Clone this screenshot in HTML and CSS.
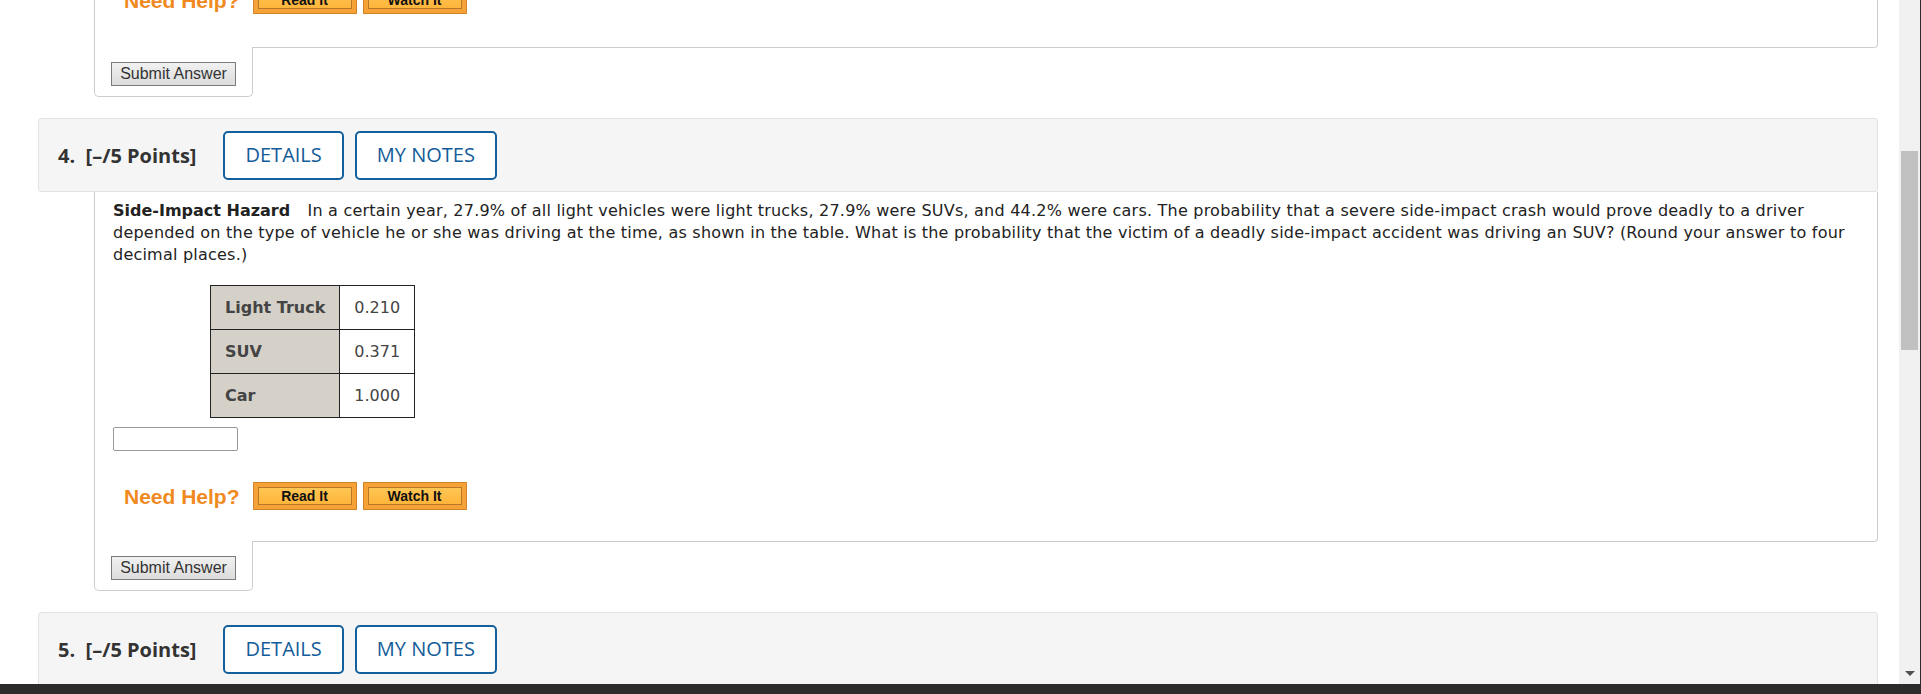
FILE: index.html
```html
<!DOCTYPE html>
<html lang="en">
<head>
<meta charset="utf-8">
<title>Assignment</title>
<link rel="stylesheet" href="styles.css">
</head>
<body>
<div class="screen">
  <div class="viewport">
    <main class="page">
      <section class="question">
        <div class="qbody qbody--cut">
          <div class="help help--first">
            <span class="help-label">Need Help?</span>
            <button class="help-btn" type="button"><span>Read It</span></button>
            <button class="help-btn" type="button"><span>Watch It</span></button>
          </div>
        </div>
        <div class="submit-tab"><button class="submit" type="button">Submit Answer</button></div>
      </section>

      <section class="question">
        <header class="qhead">
          <span class="qnum">4.&nbsp; [–/5 Points]</span>
          <button class="qbtn" type="button">DETAILS</button>
          <button class="qbtn" type="button">MY NOTES</button>
        </header>
        <div class="qbody">
          <p class="qtext"><b class="qtitle">Side-Impact Hazard</b> In a certain year, 27.9% of all light vehicles were light trucks, 27.9% were SUVs, and 44.2% were cars. The probability that a severe side-impact crash would prove deadly to a driver depended on the type of vehicle he or she was driving at the time, as shown in the table. What is the probability that the victim of a deadly side-impact accident was driving an SUV? (Round your answer to four decimal places.)</p>
          <table class="data">
            <tr><th>Light Truck</th><td>0.210</td></tr>
            <tr><th>SUV</th><td>0.371</td></tr>
            <tr><th>Car</th><td>1.000</td></tr>
          </table>
          <input class="answer" type="text" aria-label="answer">
          <div class="help">
            <span class="help-label">Need Help?</span>
            <button class="help-btn" type="button"><span>Read It</span></button>
            <button class="help-btn" type="button"><span>Watch It</span></button>
          </div>
        </div>
        <div class="submit-tab"><button class="submit" type="button">Submit Answer</button></div>
      </section>

      <section class="question">
        <header class="qhead">
          <span class="qnum">5.&nbsp; [–/5 Points]</span>
          <button class="qbtn" type="button">DETAILS</button>
          <button class="qbtn" type="button">MY NOTES</button>
        </header>
      </section>
    </main>
    <div class="scrollbar">
      <div class="thumb"></div>
      <div class="arrow"></div>
    </div>
  </div>
  <div class="taskbar"></div>
</div>
</body>
</html>
```
FILE: styles.css
```css
html, body {
  margin: 0;
  padding: 0;
  background: #fff;
}

.screen {
  width: 1921px;
  height: 694px;
  display: flex;
  flex-direction: column;
  overflow: hidden;
}

.viewport {
  flex: 1;
  display: flex;
  min-height: 0;
}

.page {
  flex: 1;
  min-width: 0;
  overflow: hidden;
  background: #fff;
}

.question {
  margin: 0 21px 0 38px;
}

.question + .question {
  margin-top: 21px;
}

/* header bar */
.qhead {
  display: flex;
  align-items: center;
  height: 74px;
  box-sizing: border-box;
  padding: 0 18px 0 19px;
  background: #f5f5f5;
  border: 1px solid #e2e2e2;
  border-radius: 3px;
}

.qnum {
  font-family: "Open Sans", sans-serif;
  font-weight: 700;
  font-size: 20px;
  color: #333;
  margin-right: 27px;
  white-space: nowrap;
}

.qbtn {
  height: 49px;
  box-sizing: border-box;
  padding: 0 20px;
  margin: 0 11px 0 0;
  border: 2px solid #14609d;
  border-radius: 5px;
  background: #fff;
  font-family: "Open Sans", sans-serif;
  font-size: 20px;
  color: #135c98;
  line-height: 1;
}

/* body */
.qbody {
  margin-left: 56px;
  padding: 8px 18px 31px 18px;
  border: 1px solid #cdcdcd;
  border-top: none;
  border-bottom-right-radius: 4px;
  background: #fff;
}

.qbody--cut {
  margin-top: -14px;
  padding-top: 0;
  padding-bottom: 33px;
}

.qtext {
  margin: 0;
  font-family: Verdana, "DejaVu Sans", sans-serif;
  font-size: 16px;
  line-height: 22px;
  letter-spacing: 0.22px;
  color: #222;
}

.qtitle {
  margin-right: 12px;
  letter-spacing: 0;
}

.data {
  margin: 19px 0 0 97px;
  border-collapse: collapse;
  font-family: Verdana, "DejaVu Sans", sans-serif;
  font-size: 16px;
  color: #444;
}

.data th,
.data td {
  height: 43px;
  padding: 0 14px;
  border: 1px solid #222;
}

.data th {
  background: #d5d1c8;
  text-align: left;
  font-weight: 700;
}

.data td {
  background: #fff;
  font-weight: 400;
}

.answer {
  display: block;
  margin-top: 9px;
  width: 125px;
  height: 24px;
  box-sizing: border-box;
  padding: 0 3px;
  border: 1px solid #999;
  border-radius: 2px;
  background: #fff;
}

/* need help row */
.help {
  display: flex;
  align-items: center;
  margin-top: 31px;
  padding-left: 11px;
}

.help--first {
  margin-top: 0;
}

.help-label {
  font-family: Arial, "Liberation Sans", sans-serif;
  font-size: 21px;
  font-weight: 700;
  line-height: 1;
  color: #f08a1e;
  margin-right: 13px;
}

.help-btn {
  width: 104px;
  height: 28px;
  box-sizing: border-box;
  padding: 4px;
  margin: 0 6px 0 0;
  border: 1px solid #d1842c;
  background: #f6a236;
}

.help-btn span {
  display: flex;
  align-items: center;
  justify-content: center;
  height: 100%;
  box-sizing: border-box;
  border: 1px solid #b8772a;
  background: linear-gradient(#ffc654, #ffb53b);
  font-family: Arial, "Liberation Sans", sans-serif;
  font-weight: 700;
  font-size: 14px;
  color: #111;
}

/* submit tab */
.submit-tab {
  margin: -1px 0 0 56px;
  width: 159px;
  box-sizing: border-box;
  padding: 15px 17px 10px 16px;
  border: 1px solid #cdcdcd;
  border-top: none;
  border-radius: 0 0 5px 5px;
  background: #fff;
}

.submit {
  display: block;
  width: 125px;
  height: 24px;
  box-sizing: border-box;
  padding: 0;
  border: 1px solid #7b7b7b;
  background: linear-gradient(#f1f1f1, #dcdcdc);
  font-family: Arial, "Liberation Sans", sans-serif;
  font-size: 16px;
  color: #333;
}

/* scrollbar */
.scrollbar {
  width: 21px;
  flex: none;
  display: flex;
  flex-direction: column;
  align-items: center;
  background: #f1f1f1;
  border-right: 1px solid #2b2b2b;
}

.thumb {
  margin-top: 151px;
  width: 17px;
  height: 199px;
  background: #c1c1c1;
}

.arrow {
  margin-top: auto;
  margin-bottom: 8px;
  width: 0;
  height: 0;
  border-left: 5px solid transparent;
  border-right: 5px solid transparent;
  border-top: 5px solid #505050;
}

.taskbar {
  height: 10px;
  flex: none;
  background: #2b2b2b;
}
```
